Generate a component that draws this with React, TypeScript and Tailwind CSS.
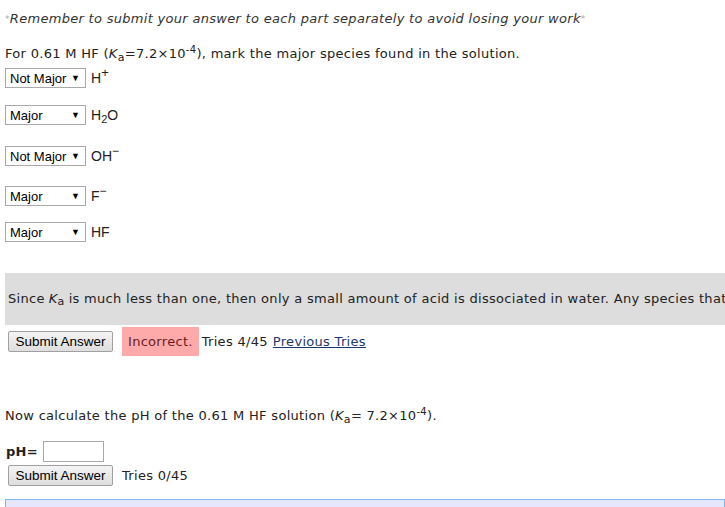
import React from 'react'

const verdana = { fontFamily: '"DejaVu Sans", Verdana, sans-serif' }

function Select({ value }: { value: string }) {
  return (
    <div className="flex h-[20px] w-[81px] shrink-0 items-center justify-between whitespace-nowrap border border-[#a9a9a9] bg-white pl-[4px] pr-[5px] font-['Liberation_Sans',Arial,sans-serif] text-[13px] leading-none tracking-normal text-black">
      <span>{value}</span>
      <span className="text-[9px]">▼</span>
    </div>
  )
}

function SpeciesRow({ value, children, className }: { value: string; children: React.ReactNode; className: string }) {
  return (
    <div className={`flex h-[20px] items-center gap-[5px] ${className}`}>
      <Select value={value} />
      <span className="font-['Liberation_Sans',Arial,sans-serif] text-[14px] leading-none tracking-normal text-[#222]">{children}</span>
    </div>
  )
}

function Button() {
  return (
    <div className="flex h-[21px] w-[105px] shrink-0 items-center justify-center rounded-[2px] border border-[#a0a0a0] bg-gradient-to-b from-[#f4f4f4] to-[#dedede] font-['Liberation_Sans',Arial,sans-serif] text-[13.5px] leading-none tracking-normal text-black">
      Submit Answer
    </div>
  )
}

export default function App() {
  return (
    <div className="h-[507px] w-[725px] overflow-hidden bg-white text-[13px] tracking-[0.3px] text-[#222]" style={verdana}>
      <p className="pl-[5px] pt-[10px] italic leading-[18px] text-[#333]">
        <span className="align-top text-[9px] text-[#aaa]">*</span>Remember to submit your answer to each part separately to avoid losing your work<span className="align-top text-[9px] text-[#aaa]">*</span>
      </p>

      <p className="mt-[17px] pl-[5px] leading-[18px]">
        For 0.61 M HF (<i>K</i><sub className="text-[11px]">a</sub>=7.2×10<sup className="text-[10px]">-4</sup>), mark the major species found in the solution.
      </p>

      <div className="pl-[5px]">
        <SpeciesRow value="Not Major" className="mt-[5px]">
          H<sup className="text-[13px]">+</sup>
        </SpeciesRow>
        <SpeciesRow value="Major" className="mt-[17px]">
          H<sub className="text-[11px]">2</sub>O
        </SpeciesRow>
        <SpeciesRow value="Not Major" className="mt-[21px]">
          OH<sup className="text-[12px]">−</sup>
        </SpeciesRow>
        <SpeciesRow value="Major" className="mt-[20px]">
          F<sup className="text-[12px]">−</sup>
        </SpeciesRow>
        <SpeciesRow value="Major" className="mt-[16px]">
          HF
        </SpeciesRow>
      </div>

      <div className="ml-[5px] mt-[31px] flex h-[52px] items-center overflow-hidden whitespace-nowrap bg-[#dddddd] pl-[3px]">
        Since <i className="ml-[4px]">K</i><sub className="mr-[4px] text-[11px]">a</sub> is much less than one, then only a small amount of acid is dissociated in water. Any species that is
      </div>

      <div className="mt-[2px] flex items-center pl-[8px]">
        <Button />
        <div className="ml-[9px] flex h-[29px] items-center bg-[#ffaaaa] px-[6px] text-[#6b1a24]">Incorrect.</div>
        <span className="ml-[3px]">Tries 4/45</span>
        <span className="ml-[5px] text-[#1a3a6b] underline">Previous Tries</span>
      </div>

      <p className="mt-[51px] pl-[5px] leading-[18px]">
        Now calculate the pH of the 0.61 M HF solution (<i>K</i><sub className="text-[11px]">a</sub>= 7.2×10<sup className="text-[10px]">-4</sup>).
      </p>

      <div className="mt-[16px] flex items-center pl-[6px]">
        <span className="font-bold">pH=</span>
        <div className="ml-[5px] h-[21px] w-[61px] border border-[#a9a9a9] bg-white" />
      </div>

      <div className="mt-[3px] flex items-center pl-[8px]">
        <Button />
        <span className="ml-[9px]">Tries 0/45</span>
      </div>

      <div className="ml-[5px] mt-[13px] h-[40px] border border-[#7ab8f0] bg-[#e6e6ff]" />
    </div>
  )
}
